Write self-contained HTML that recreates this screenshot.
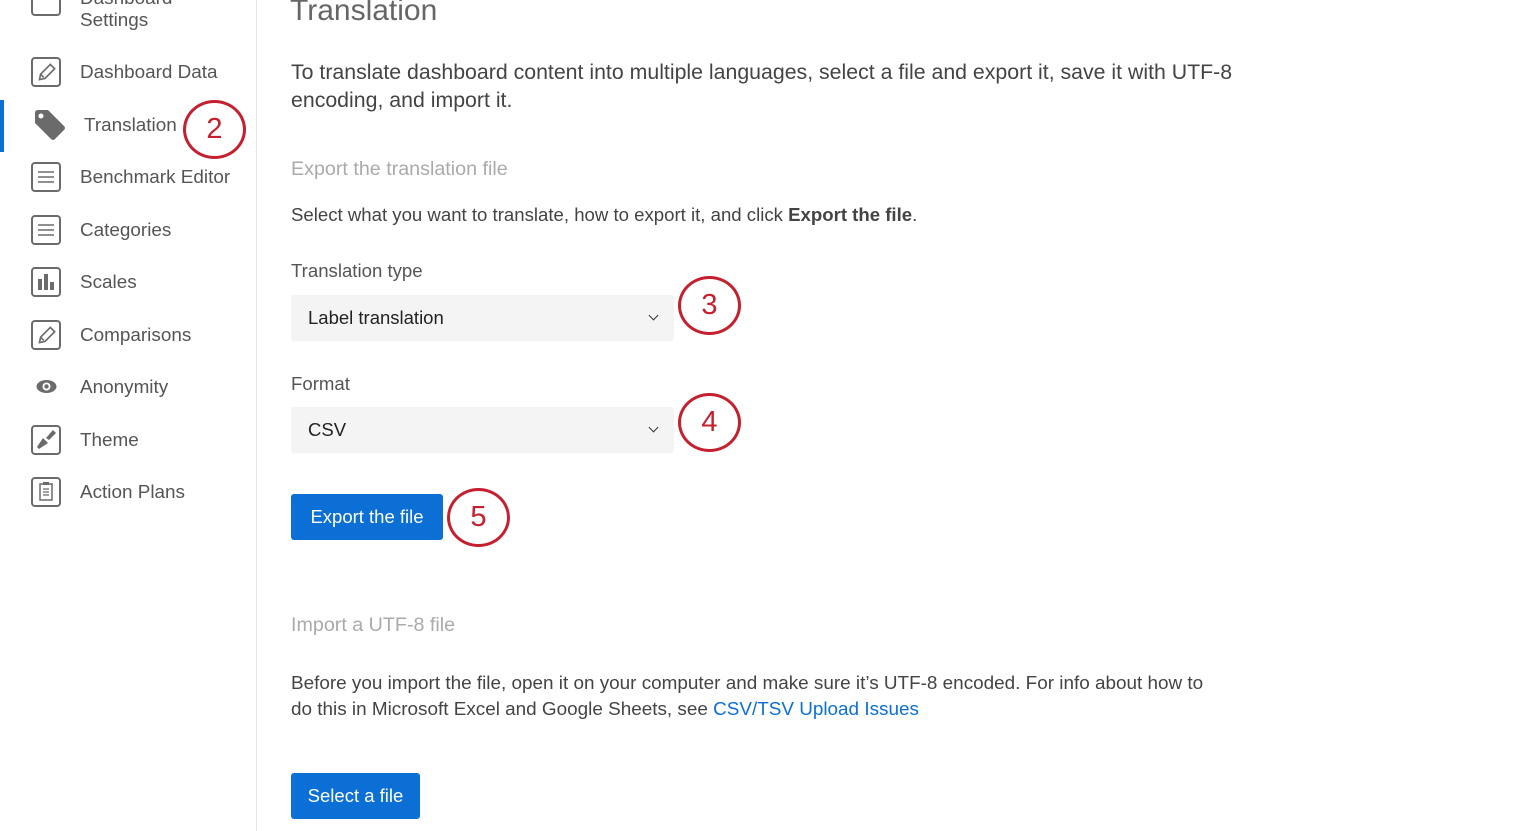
<!DOCTYPE html>
<html><head><meta charset="utf-8"><style>
body{margin:0;width:1536px;height:831px;overflow:hidden;background:#fff;font-family:"Liberation Sans",sans-serif;color:#555;position:relative}
.a{position:absolute;white-space:nowrap}
.side{position:absolute;left:0;top:0;width:256px;height:831px;border-right:1px solid #e6e6e6}
.nav{position:absolute;left:80px;font-size:18.9px;color:#555}
.ic{position:absolute;left:31px;width:30px;height:30px;border:2px solid #6b6b6b;border-radius:4px;box-sizing:border-box}
.sel{position:absolute;left:291px;width:383px;height:46px;background:#f4f4f4;border-radius:3px}
.sel span{position:absolute;left:17px;top:12px;font-size:18.5px;color:#222}
.sel i{position:absolute;right:17px;top:17px;width:6px;height:6px;border-right:1.5px solid #333;border-bottom:1.5px solid #333;transform:rotate(45deg)}
.btn{position:absolute;left:291px;height:46px;background:#0b6fd6;border-radius:3px;color:#fff;font-size:18.5px;line-height:46px;text-align:center}
.c{position:absolute;border:3.5px solid #c4202f;border-radius:50%;color:#c4202f;font-size:29px;text-align:center;box-sizing:border-box}
p{margin:0}
</style></head><body>
<div class="side"></div>
<div style="position:absolute;left:0;top:100px;width:4px;height:52px;background:#0b6fd6"></div>
<div class="ic" style="top:-14px"></div>
<div class="nav" style="top:-12px">Dashboard</div>
<div class="nav" style="top:10px">Settings</div>
<div class="ic" style="top:57px"><svg width="26" height="26" viewBox="0 0 24 24"><path d="M6 19l1-5 9-9 4 4-9 9z M7 14l3 3" fill="none" stroke="#6b6b6b" stroke-width="1.5"/></svg></div>
<div class="nav" style="top:62px">Dashboard Data</div>
<svg class="a" style="left:33px;top:109px" width="34" height="32" viewBox="0 0 34 32"><path d="M2 4 Q2 1 5 1 L15 1 L31 17 Q33 19 31 21 L22 30 Q20 32 18 30 L2 14 Z" fill="#6b6b6b"/><circle cx="8" cy="7" r="2.5" fill="#fff"/></svg>
<div class="nav" style="top:115px;left:84px">Translation</div>
<div class="ic" style="top:162px"><svg width="26" height="26"><path d="M5 8h16M5 13h16M5 18h16" stroke="#6b6b6b" stroke-width="1.5"/></svg></div>
<div class="nav" style="top:167px">Benchmark Editor</div>
<div class="ic" style="top:215px"><svg width="26" height="26"><path d="M5 8h16M5 13h16M5 18h16" stroke="#6b6b6b" stroke-width="1.5"/></svg></div>
<div class="nav" style="top:220px">Categories</div>
<div class="ic" style="top:267px"><svg width="26" height="26"><path d="M5 10h4v11H5zM11 5h4v16h-4zM17 13h4v8h-4z" fill="#6b6b6b"/></svg></div>
<div class="nav" style="top:272px">Scales</div>
<div class="ic" style="top:320px"><svg width="26" height="26" viewBox="0 0 24 24"><path d="M6 19l1-5 9-9 4 4-9 9z M7 14l3 3" fill="none" stroke="#6b6b6b" stroke-width="1.5"/></svg></div>
<div class="nav" style="top:325px">Comparisons</div>
<svg class="a" style="left:36px;top:379px" width="21" height="15"><ellipse cx="10.5" cy="7.5" rx="10" ry="6.5" fill="#6b6b6b"/><circle cx="10.5" cy="7.5" r="4" fill="#fff"/><circle cx="10.5" cy="7.5" r="2.2" fill="#6b6b6b"/></svg>
<div class="nav" style="top:377px">Anonymity</div>
<div class="ic" style="top:425px"><svg width="26" height="26"><path d="M4 20l6-9 5 5-9 6zM13 11l7-8 3 3-7 7z" fill="#6b6b6b"/></svg></div>
<div class="nav" style="top:430px">Theme</div>
<div class="ic" style="top:477px"><svg width="26" height="26"><rect x="7" y="5" width="12" height="16" fill="none" stroke="#6b6b6b" stroke-width="1.5"/><rect x="10" y="3" width="6" height="3" fill="#6b6b6b"/><path d="M10 10h6M10 13h6M10 16h6" stroke="#6b6b6b" stroke-width="1.3"/></svg></div>
<div class="nav" style="top:482px">Action Plans</div>

<div class="a" style="left:290px;top:-6px;font-size:30px;color:#666;font-weight:300">Translation</div>
<p class="a" style="left:291px;top:58px;font-size:21.3px;line-height:28px;color:#444">To translate dashboard content into multiple languages, select a file and export it, save it with UTF-8<br>encoding, and import it.</p>
<div class="a" style="left:291px;top:158px;font-size:19.7px;color:#aaa">Export the translation file</div>
<div class="a" style="left:291px;top:204px;font-size:18.6px;color:#444">Select what you want to translate, how to export it, and click <b>Export the file</b>.</div>
<div class="a" style="left:291px;top:260px;font-size:18.6px;color:#555">Translation type</div>
<div class="sel" style="top:295px"><span>Label translation</span><i></i></div>
<div class="a" style="left:291px;top:373px;font-size:18.6px;color:#555">Format</div>
<div class="sel" style="top:407px"><span>CSV</span><i></i></div>
<div class="btn" style="top:494px;width:152px">Export the file</div>
<div class="a" style="left:291px;top:614px;font-size:19.7px;color:#aaa">Import a UTF-8 file</div>
<p class="a" style="left:291px;top:671px;font-size:18.9px;line-height:26px;color:#444">Before you import the file, open it on your computer and make sure it’s UTF-8 encoded. For info about how to<br>do this in Microsoft Excel and Google Sheets, see <span style="color:#0b6fd6">CSV/TSV Upload Issues</span></p>
<div class="btn" style="top:773px;width:129px">Select a file</div>

<div class="c" style="left:183px;top:100px;width:63px;height:59px;line-height:52px">2</div>
<div class="c" style="left:678px;top:276px;width:63px;height:59px;line-height:52px">3</div>
<div class="c" style="left:678px;top:393px;width:63px;height:59px;line-height:52px">4</div>
<div class="c" style="left:447px;top:488px;width:63px;height:59px;line-height:52px">5</div>
</body></html>
